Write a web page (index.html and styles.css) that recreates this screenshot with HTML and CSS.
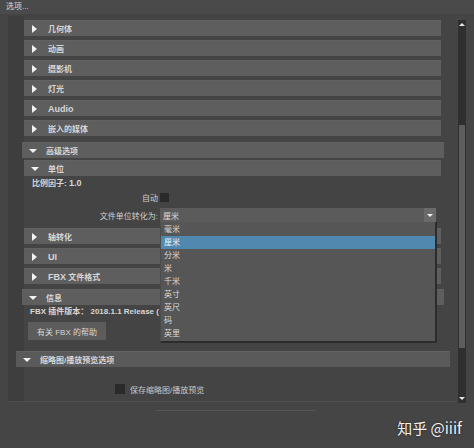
FILE: index.html
```html
<!DOCTYPE html>
<html lang="zh">
<head>
<meta charset="utf-8">
<title>选项...</title>
<link rel="stylesheet" href="styles.css">
</head>
<body>
<div class="window">
  <div class="titlebar">选项...</div>
  <div class="body">
    <div class="panel">
      <div class="row"><span class="tri-r"></span><span class="lbl">几何体</span></div>
      <div class="row"><span class="tri-r"></span><span class="lbl">动画</span></div>
      <div class="row"><span class="tri-r"></span><span class="lbl">摄影机</span></div>
      <div class="row"><span class="tri-r"></span><span class="lbl">灯光</span></div>
      <div class="row"><span class="tri-r"></span><span class="lbl en">Audio</span></div>
      <div class="row last"><span class="tri-r"></span><span class="lbl">嵌入的媒体</span></div>
      <div class="row wide tight"><span class="tri-d"></span><span class="lbl">高级选项</span></div>
      <div class="row flush"><span class="tri-d"></span><span class="lbl">单位</span></div>
      <div class="text-line scale">比例因子: <span class="en">1.0</span></div>
      <div class="form-row">
        <span class="form-label">自动</span>
        <span class="check"></span>
      </div>
      <div class="form-row combo-row">
        <span class="form-label">文件单位转化为:</span>
        <div class="combo"><span class="combo-text">厘米</span><span class="combo-btn"><span class="tri-small"></span></span></div>
      </div>
      <div class="row after-combo"><span class="tri-r"></span><span class="lbl">轴转化</span></div>
      <div class="row"><span class="tri-r"></span><span class="lbl en">UI</span></div>
      <div class="row last-small"><span class="tri-r"></span><span class="lbl"><span class="en">FBX</span> 文件格式</span></div>
      <div class="row wide flush"><span class="tri-d"></span><span class="lbl">信息</span></div>
      <div class="text-line version">FBX 插件版本： 2018.1.1 Release (</div>
      <button class="btn">有关 FBX 的帮助</button>
      <div class="row top"><span class="tri-d"></span><span class="lbl">缩略图/播放预览选项</span></div>
      <div class="check-line"><span class="check"></span><span class="check-text">保存缩略图/播放预览</span></div>
    </div>
    <div class="scrollbar">
      <span class="sb-up"></span>
      <span class="sb-track"><span class="sb-thumb"></span></span>
      <span class="sb-down"></span>
    </div>
  </div>
  <div class="footer">
    <div class="splitter"></div>
    <div class="watermark">知乎 @iiif</div>
  </div>

  <ul class="popup">
    <li>毫米</li>
    <li class="sel">厘米</li>
    <li>分米</li>
    <li>米</li>
    <li>千米</li>
    <li>英寸</li>
    <li>英尺</li>
    <li>码</li>
    <li>英里</li>
  </ul>
</div>
</body>
</html>
```
FILE: styles.css
```css
* { box-sizing: border-box; }

html, body {
  margin: 0;
  padding: 0;
}

body {
  width: 474px;
  height: 448px;
  overflow: hidden;
  background: #454545;
  font-family: "Liberation Sans", "Noto Sans CJK SC", sans-serif;
  font-size: 8px;
  color: #d4d4d4;
}

.en { font-size: 9px; }

.window {
  position: relative;
  width: 474px;
  height: 448px;
  background: #454545;
}

.titlebar {
  height: 16px;
  line-height: 14px;
  padding-left: 6px;
  background: #4a4a4a;
  border-bottom: 2px solid #434343;
  color: #dadada;
}

.body {
  display: flex;
  height: 386px;
}

.panel {
  margin-left: 8px;
  width: 448px;
  height: 386px;
  padding-top: 4px;
  background: linear-gradient(to right, #3e3e3e 16px, #444444 16px);
  border-bottom: 1px solid #4f4f4f;
}

/* collapsible frame headers */
.row {
  display: flex;
  align-items: center;
  height: 16px;
  margin: 0 15px 4px 16px;
  background: #5e5e5e;
  border-top: 1px solid #626262;
  font-weight: 700;
  color: #d6d6d6;
}
.row.last { margin-bottom: 6px; }
.row.tight { margin-bottom: 2px; }
.row.flush { margin-bottom: 0; }
.row.last-small { margin-bottom: 5px; }
.row.after-combo { margin-top: 6px; }
.row.wide { margin-left: 14px; margin-right: 12px; }
.row.top { margin-left: 8px; margin-right: 6px; margin-top: 11px; background: #5a5a5a; }

.tri-r {
  width: 0;
  height: 0;
  margin-left: 8px;
  border-top: 4px solid transparent;
  border-bottom: 4px solid transparent;
  border-left: 5px solid #f2f2f2;
}
.tri-d {
  width: 0;
  height: 0;
  margin-left: 7px;
  border-left: 4px solid transparent;
  border-right: 4px solid transparent;
  border-top: 4px solid #f2f2f2;
}
.row .tri-r + .lbl { margin-left: 11px; }
.row .tri-d + .lbl { margin-left: 9px; }

.text-line {
  height: 14px;
  line-height: 14px;
  font-weight: 700;
  color: #d6d6d6;
  white-space: nowrap;
}
.scale { padding-left: 24px; }
.version { padding-left: 22px; }

.form-row {
  display: grid;
  grid-template-columns: 150px 1fr;
  column-gap: 2px;
  align-items: center;
  height: 14px;
}
.form-label {
  text-align: right;
  color: #d0d0d0;
}
.check {
  display: block;
  width: 9px;
  height: 9px;
  background: #2a2a2a;
}
.combo-row { margin-top: 4px; }
.combo {
  display: flex;
  align-items: center;
  justify-content: space-between;
  width: 276px;
  height: 14px;
  background: #5b5b5b;
}
.combo-text { padding-left: 3px; color: #dcdcdc; }
.combo-btn {
  display: flex;
  align-items: center;
  justify-content: center;
  width: 12px;
  height: 14px;
  background: #6a6a6a;
}
.tri-small {
  width: 0;
  height: 0;
  border-left: 3px solid transparent;
  border-right: 3px solid transparent;
  border-top: 3px solid #f0f0f0;
}

.btn {
  display: block;
  margin: 3px 0 0 20px;
  width: 78px;
  height: 18px;
  padding: 0;
  border: 0;
  background: #5c5c5c;
  color: #d8d8d8;
  font: inherit;
}

.check-line {
  display: flex;
  align-items: center;
  gap: 5px;
  margin: 16px 0 0 107px;
  height: 12px;
}
.check-line .check { width: 10px; height: 10px; }
.check-text { color: #c8c8c8; }

/* vertical scrollbar */
.scrollbar {
  display: flex;
  flex-direction: column;
  align-items: center;
  margin: 4px 0 0 2px;
  width: 8px;
  height: 383px;
  background: #2f2f2f;
}
.sb-up, .sb-down {
  flex: none;
  width: 0;
  height: 0;
  margin: 3px 0;
  border-left: 3px solid transparent;
  border-right: 3px solid transparent;
}
.sb-up { border-bottom: 3px solid #e6e6e6; }
.sb-down { border-top: 3px solid #e6e6e6; }
.sb-track {
  flex: 1;
  width: 8px;
  padding-top: 96px;
  padding-bottom: 46px;
}
.sb-thumb {
  display: block;
  width: 6px;
  height: 100%;
  margin-left: 1px;
  background: #5d5d5d;
}

.footer {
  display: flex;
  flex-direction: column;
  height: 46px;
}
.splitter {
  margin: 8px 0 0 155px;
  width: 161px;
  height: 1px;
  background: #545454;
}
.watermark {
  align-self: flex-end;
  margin: 7px 12px 0 0;
  font-family: "Noto Sans CJK SC", sans-serif;
  font-size: 15px;
  line-height: 20px;
  color: #f2f2f2;
  text-shadow: 0 0 2px rgba(0, 0, 0, 0.6);
}

/* open combo box list */
.popup {
  position: absolute;
  left: 160px;
  top: 222px;
  width: 277px;
  height: 121px;
  margin: 0;
  padding: 1px 0 0;
  list-style: none;
  background: #565656;
  border-left: 1px solid #4c4c4c;
  border-right: 2px solid #2c2c2c;
  border-bottom: 2px solid #2c2c2c;
}
.popup li {
  height: 13px;
  line-height: 13px;
  padding-left: 3px;
  color: #dadada;
}
.popup li.sel {
  background: #5088b0;
  color: #f0f0f0;
}
```
